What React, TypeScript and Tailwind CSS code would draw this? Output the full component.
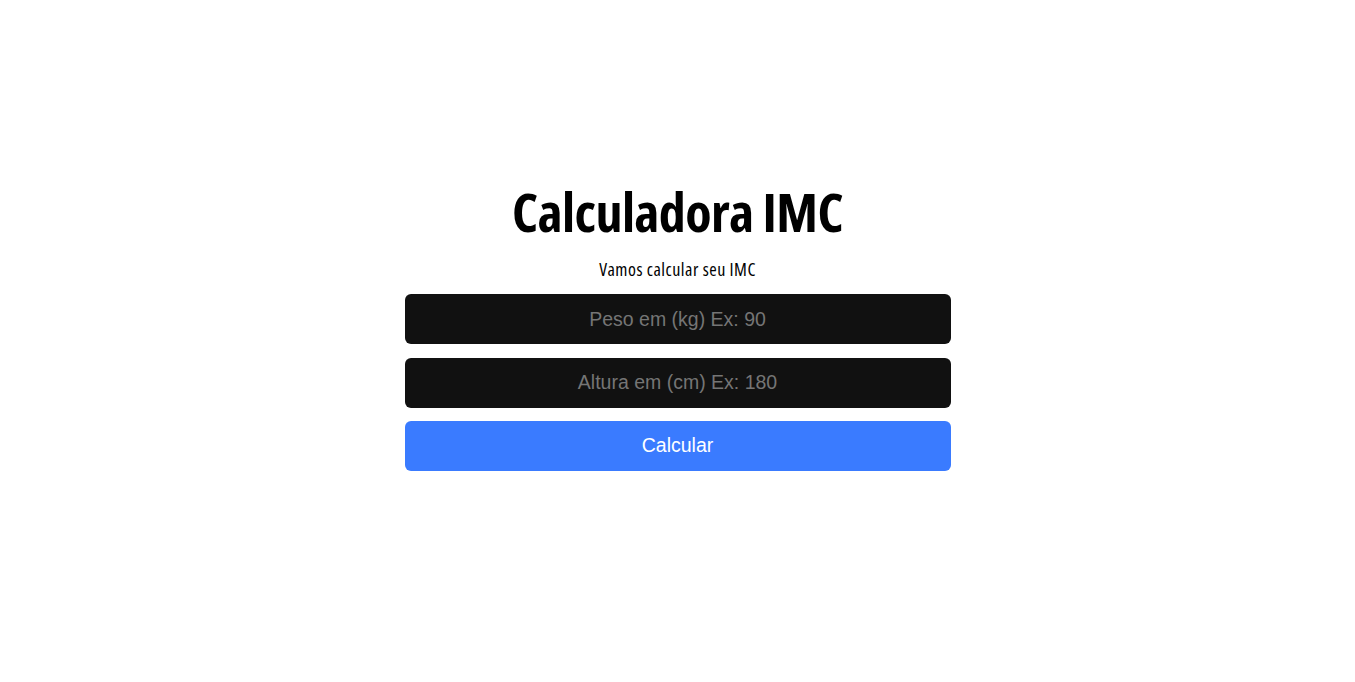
const condensed = "[font-family:'Open_Sans',sans-serif] [font-stretch:75%]";

export default function App() {
  return (
    <div className="min-h-screen w-full bg-white flex justify-center">
      <main className="w-[546px] pt-[179px] flex flex-col items-center">
        <h1 className={`text-[54px] leading-[64px] font-bold text-black tracking-[-0.6px] ${condensed}`}>
          Calculadora IMC
        </h1>
        <p className={`mt-[15px] text-[18px] leading-[22px] text-black tracking-[0.5px] ${condensed}`}>
          Vamos calcular seu IMC
        </p>
        <form className="mt-[14px] w-full flex flex-col gap-[13.5px]" onSubmit={(e) => e.preventDefault()}>
          <input
            type="text"
            inputMode="decimal"
            placeholder="Peso em (kg) Ex: 90"
            className="h-[50px] w-full rounded-[6px] bg-[#111111] text-center text-[19.5px] text-white placeholder:text-[#757575] outline-none [font-family:'Liberation_Sans',Arial,sans-serif]"
          />
          <input
            type="text"
            inputMode="decimal"
            placeholder="Altura em (cm) Ex: 180"
            className="h-[50px] w-full rounded-[6px] bg-[#111111] text-center text-[19.5px] text-white placeholder:text-[#757575] outline-none [font-family:'Liberation_Sans',Arial,sans-serif]"
          />
          <button
            type="submit"
            className="h-[50px] w-full rounded-[6px] bg-[#3a7bff] text-center text-[19.5px] text-white [font-family:'Liberation_Sans',Arial,sans-serif]"
          >
            Calcular
          </button>
        </form>
      </main>
    </div>
  );
}
